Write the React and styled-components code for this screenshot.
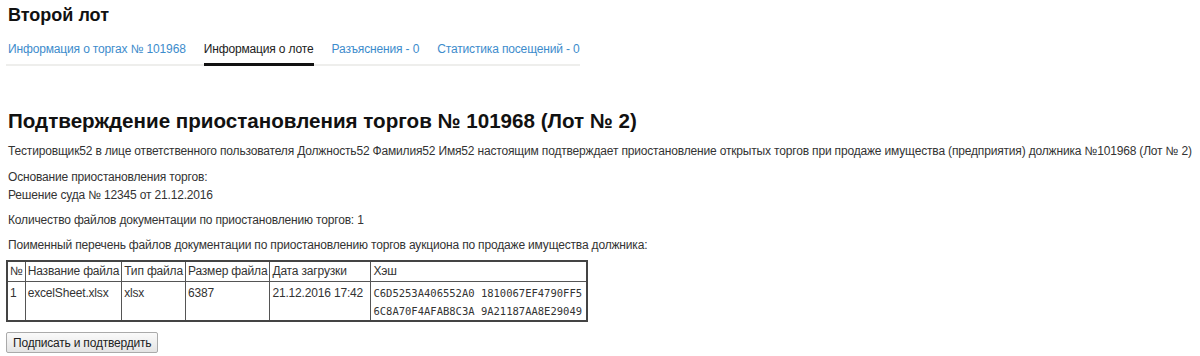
import styled, { createGlobalStyle } from 'styled-components';

const GlobalStyle = createGlobalStyle`
body {
    margin: 0;
    background: #fff;
    font-family: "Liberation Sans", Arial, sans-serif;
    color: #333;
}
`
const Page = styled.div`
padding: 4px 6px 0 6px;
`
const LotTitle = styled.div`
font-size: 18px;
font-weight: 700;
color: #111;
padding-left: 2px;
line-height: 22px;
`
const Tabs = styled.div`
display: flex;
width: 572px;
margin-top: 16px;
border-bottom: 2px solid #eeeeec;
padding-left: 2px;
`
const Tab = styled.a`
font-size: 12px;
letter-spacing: -0.15px;
line-height: 15px;
white-space: nowrap;
flex-shrink: 0;
padding-bottom: 6px;
margin-right: 18px;
margin-bottom: -2px;
color: ${props => props.active ? '#222' : '#3d8ccc'};
border-bottom: 3px solid ${props => props.active ? '#111' : 'transparent'};
cursor: pointer;
`
const Heading = styled.div`
font-size: 20.6px;
font-weight: 700;
color: #111;
margin-top: 43px;
padding-left: 2px;
line-height: 24px;
white-space: nowrap;
`
const Text = styled.div`
font-size: 12px;
letter-spacing: -0.17px;
line-height: 18px;
padding-left: 2px;
white-space: nowrap;
margin-top: ${props => props.gap || 0}px;
`
const Table = styled.table`
border-collapse: collapse;
border: 2px solid #444;
margin-top: 6px;
font-size: 12px;
letter-spacing: -0.17px;
`
const Cell = styled.td`
border: 1px solid #555;
padding: 0 2px;
vertical-align: top;
line-height: ${props => props.head ? '19px' : '18px'};
height: ${props => props.head ? '19px' : '35px'};
padding-top: ${props => props.head ? '0' : '2px'};
white-space: nowrap;
`
const Hash = styled.div`
font-family: "DejaVu Sans Mono", "Liberation Mono", monospace;
font-size: 10.5px;
letter-spacing: 0;
line-height: 18px;
`
const Button = styled.button`
display: block;
margin-top: 10px;
font-family: "Liberation Sans", Arial, sans-serif;
font-size: 12px;
letter-spacing: -0.2px;
color: #222;
background: linear-gradient(#fafafa, #e4e4e4);
border: 1px solid #aaa;
border-radius: 2px;
padding: 2px 6px;
height: 21px;
`

const columns = ['№', 'Название файла', 'Тип файла', 'Размер файла', 'Дата загрузки', 'Хэш'];

function App() {
    return (
        <Page>
            <GlobalStyle />
            <LotTitle>Второй лот</LotTitle>
            <Tabs>
                <Tab>Информация о торгах № 101968</Tab>
                <Tab active>Информация о лоте</Tab>
                <Tab>Разъяснения - 0</Tab>
                <Tab>Статистика посещений - 0</Tab>
            </Tabs>
            <Heading>Подтверждение приостановления торгов № 101968 (Лот № 2)</Heading>
            <Text gap={9}>Тестировщик52 в лице ответственного пользователя Должность52 Фамилия52 Имя52 настоящим подтверждает приостановление открытых торгов при продаже имущества (предприятия) должника №101968 (Лот № 2)</Text>
            <Text gap={8}>Основание приостановления торгов:</Text>
            <Text>Решение суда № 12345 от 21.12.2016</Text>
            <Text gap={7}>Количество файлов документации по приостановлению торгов: 1</Text>
            <Text gap={7}>Поименный перечень файлов документации по приостановлению торгов аукциона по продаже имущества должника:</Text>
            <Table>
                <tbody>
                    <tr>
                        {columns.map((c, i) => <Cell head key={i} style={i === 4 ? { width: 96 } : i === 5 ? { width: 211 } : undefined}>{c}</Cell>)}
                    </tr>
                    <tr>
                        <Cell>1</Cell>
                        <Cell>excelSheet.xlsx</Cell>
                        <Cell>xlsx</Cell>
                        <Cell>6387</Cell>
                        <Cell>21.12.2016 17:42</Cell>
                        <Cell>
                            <Hash>C6D5253A406552A0 1810067EF4790FF5</Hash>
                            <Hash>6C8A70F4AFAB8C3A 9A21187AA8E29049</Hash>
                        </Cell>
                    </tr>
                </tbody>
            </Table>
            <Button>Подписать и подтвердить</Button>
        </Page>
    );
}

export default App;
